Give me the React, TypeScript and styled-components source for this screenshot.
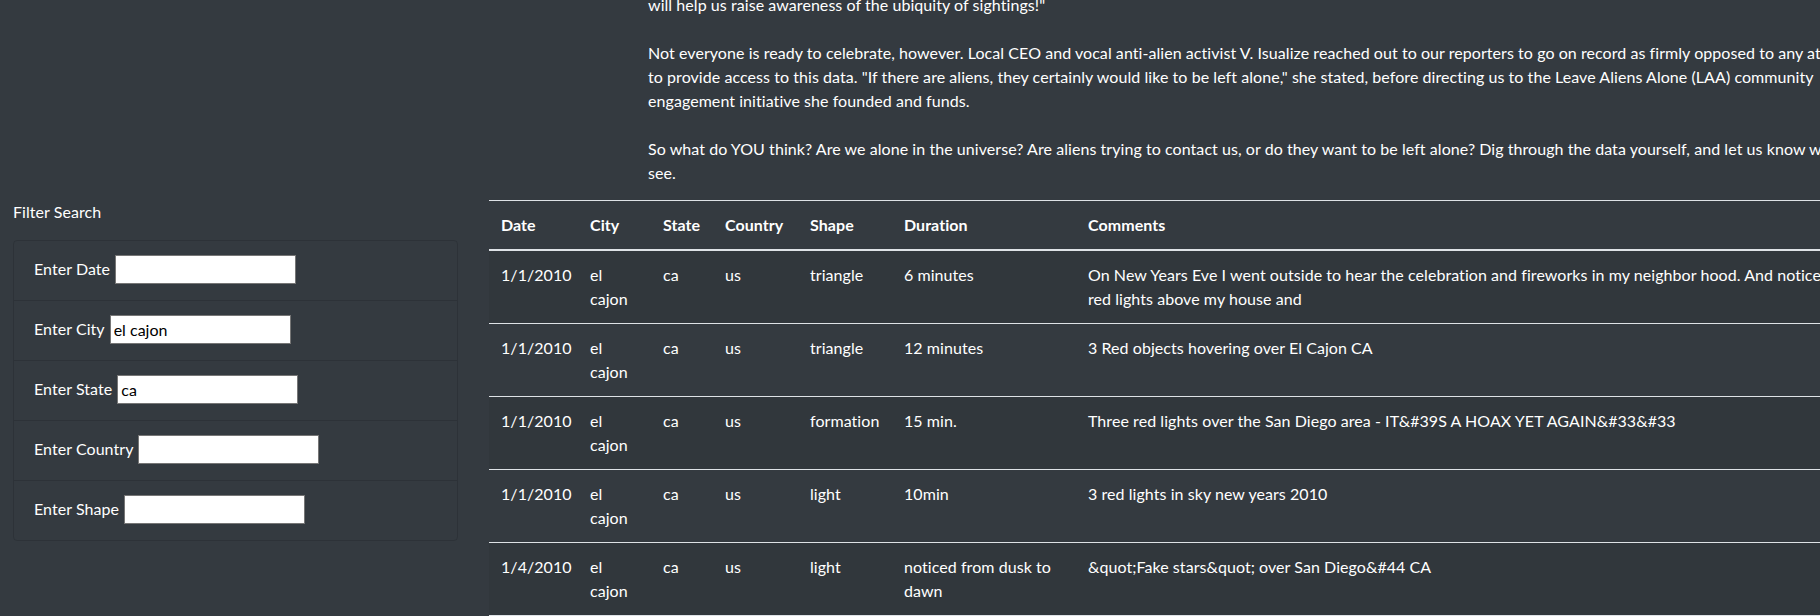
import React from "react";
import styled, { createGlobalStyle } from "styled-components";

const GlobalStyle = createGlobalStyle`
  html, body {
    margin: 0;
    padding: 0;
    overflow: hidden;
    background: #343a40;
  }
  body {
    color: #ffffff;
    font-family: "Lato", "Segoe UI", "Liberation Sans", sans-serif;
    font-size: 16px;
    line-height: 1.5;
    letter-spacing: 0.06px;
  }
`;

const Page = styled.div`
  width: 1900px;
  background: #343a40;
`;

const Article = styled.article`
  margin: -7px 0 0 648px;
  width: 1230px;
`;

const Para = styled.p`
  margin: 0 0 24px;
  &:last-child {
    margin-bottom: 0;
  }
`;

const Main = styled.div`
  display: flex;
  align-items: flex-start;
  margin-top: 15px;
`;

const Sidebar = styled.aside`
  width: 445px;
  margin-left: 13px;
  flex: none;
`;

const SidebarTitle = styled.div`
  line-height: 24px;
  margin-bottom: 16px;
`;

const FilterList = styled.ul`
  list-style: none;
  margin: 0;
  padding: 0;
  border: 1px solid rgba(0, 0, 0, 0.125);
  border-radius: 4px;
`;

const FilterItem = styled.li`
  display: flex;
  align-items: center;
  height: 59px;
  padding: 0 20px 3px;
  box-sizing: border-box;
  & + & {
    border-top: 1px solid rgba(0, 0, 0, 0.125);
    height: 60px;
  }
`;

const FilterLabel = styled.label`
  display: flex;
  align-items: center;
`;

const FilterInput = styled.input`
  width: 181px;
  height: 29px;
  box-sizing: border-box;
  margin: 0 0 0 5px;
  padding: 1px 3px;
  border: 1px solid #767676;
  border-radius: 0;
  background: #ffffff;
  color: #000000;
  font-family: "Lato", "Segoe UI", "Liberation Sans", sans-serif;
  font-size: 16px;
  outline: none;
`;

const TableWrap = styled.div`
  margin-left: 31px;
  width: 1375px;
  flex: none;
`;

const Table = styled.table`
  width: 100%;
  table-layout: fixed;
  border-collapse: collapse;
  color: #ffffff;
`;

const HeadCell = styled.th<{ $w?: number }>`
  box-sizing: border-box;
  width: ${(p) => (p.$w ? `${p.$w}px` : "auto")};
  text-align: left;
  font-weight: 700;
  padding: 12px;
  vertical-align: bottom;
  border-top: 1px solid #dee2e6;
  border-bottom: 2px solid #dee2e6;
`;

const Row = styled.tr`
  &:nth-of-type(odd) {
    background: rgba(0, 0, 0, 0.05);
  }
`;

const Cell = styled.td`
  padding: 12px;
  vertical-align: top;
  border-bottom: 1px solid #dee2e6;
`;

const filters = [
  { label: "Enter Date", value: "" },
  { label: "Enter City", value: "el cajon" },
  { label: "Enter State", value: "ca" },
  { label: "Enter Country", value: "" },
  { label: "Enter Shape", value: "" },
];

const columns: { title: string; w?: number }[] = [
  { title: "Date", w: 89 },
  { title: "City", w: 73 },
  { title: "State", w: 62 },
  { title: "Country", w: 85 },
  { title: "Shape", w: 94 },
  { title: "Duration", w: 184 },
  { title: "Comments" },
];

const rows = [
  [
    "1/1/2010",
    "el cajon",
    "ca",
    "us",
    "triangle",
    "6 minutes",
    "On New Years Eve I went outside to hear the celebration and fireworks in my neighbor hood. And noticed 3 red lights above my house and",
  ],
  ["1/1/2010", "el cajon", "ca", "us", "triangle", "12 minutes", "3 Red objects hovering over El Cajon CA"],
  [
    "1/1/2010",
    "el cajon",
    "ca",
    "us",
    "formation",
    "15 min.",
    "Three red lights over the San Diego area - IT&#39S A HOAX YET AGAIN&#33&#33",
  ],
  ["1/1/2010", "el cajon", "ca", "us", "light", "10min", "3 red lights in sky new years 2010"],
  [
    "1/4/2010",
    "el cajon",
    "ca",
    "us",
    "light",
    "noticed from dusk to dawn",
    "&quot;Fake stars&quot; over San Diego&#44 CA",
  ],
];

export default function App() {
  return (
    <>
      <GlobalStyle />
      <Page>
        <Article>
          <Para>will help us raise awareness of the ubiquity of sightings!"</Para>
          <Para>
            Not everyone is ready to celebrate, however. Local CEO and vocal anti-alien activist V. Isualize reached out to
            our reporters to go on record as firmly opposed to any attempts to provide access to this data. "If there are
            aliens, they certainly would like to be left alone," she stated, before directing us to the Leave Aliens Alone
            (LAA) community engagement initiative she founded and funds.
          </Para>
          <Para>
            So what do YOU think? Are we alone in the universe? Are aliens trying to contact us, or do they want to be left
            alone? Dig through the data yourself, and let us know what you see.
          </Para>
        </Article>
        <Main>
          <Sidebar>
            <SidebarTitle>Filter Search</SidebarTitle>
            <FilterList>
              {filters.map((f) => (
                <FilterItem key={f.label}>
                  <FilterLabel>
                    {f.label}
                    <FilterInput type="text" defaultValue={f.value} />
                  </FilterLabel>
                </FilterItem>
              ))}
            </FilterList>
          </Sidebar>
          <TableWrap>
            <Table>
              <thead>
                <tr>
                  {columns.map((c) => (
                    <HeadCell key={c.title} $w={c.w}>
                      {c.title}
                    </HeadCell>
                  ))}
                </tr>
              </thead>
              <tbody>
                {rows.map((r, i) => (
                  <Row key={i}>
                    {r.map((v, j) => (
                      <Cell key={j}>{v}</Cell>
                    ))}
                  </Row>
                ))}
              </tbody>
            </Table>
          </TableWrap>
        </Main>
      </Page>
    </>
  );
}
